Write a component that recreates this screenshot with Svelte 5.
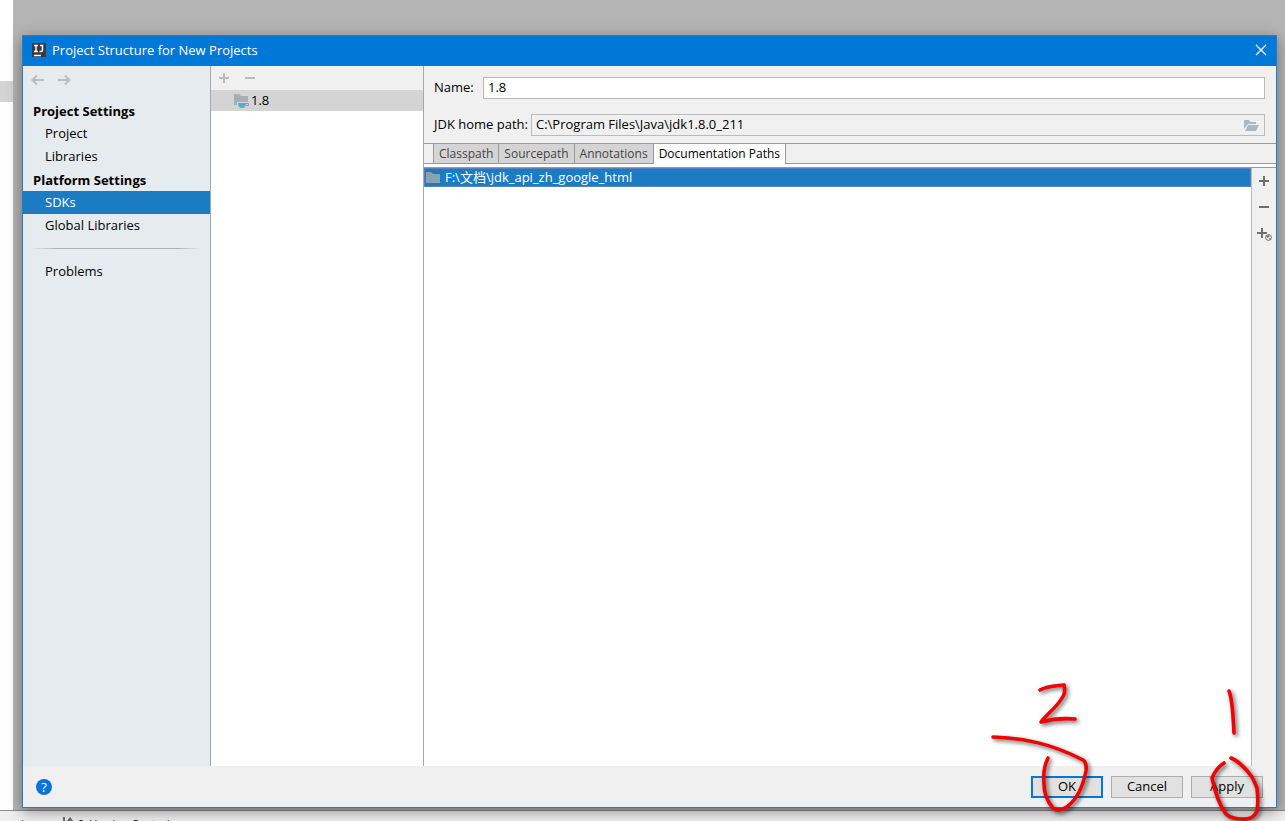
<script>
  const groups = [
    { title: 'Project Settings', items: ['Project', 'Libraries'] },
    { title: 'Platform Settings', items: ['SDKs', 'Global Libraries'] },
  ];
  const tabs = ['Classpath', 'Sourcepath', 'Annotations', 'Documentation Paths'];
  let section = $state('SDKs');
  let tab = $state('Documentation Paths');
  let name = $state('1.8');
  let home = $state('C:\\Program Files\\Java\\jdk1.8.0_211');
</script>

<div class="screen">
  <div class="ide">
    <div class="gutter"><div class="mark"></div></div>
    <div class="canvas"></div>
  </div>
  <div class="status">
    <span>ing</span>
    <svg width="12" height="14" viewBox="0 0 12 14" aria-hidden="true">
      <path d="M2 1v12M8 3v8" stroke="#6e6e6e" stroke-width="2" /><path d="M4 6l4-5 4 5z" fill="#6e6e6e" />
    </svg>
    <span>9: Version Control</span>
  </div>

  <div class="dialog" role="dialog" aria-labelledby="title">
    <header>
      <svg width="14" height="14" viewBox="0 0 14 14" aria-hidden="true">
        <rect width="14" height="14" fill="#3b3b3f" />
        <path d="M2 2.500h4M4 2.500v6M2 8.500h4M8 2.500h2.500v4.500q0 1.500-1.500 1.500h-1.500M2 12.500h7" fill="none" stroke="#fff" stroke-width="1.400" />
      </svg>
      <h1 id="title">Project Structure for New Projects</h1>
      <button class="icon" aria-label="Close">
        <svg width="12" height="12" viewBox="0 0 12 12"><path d="M1 1l10 10M11 1L1 11" stroke="#fff" stroke-width="1.200" /></svg>
      </button>
    </header>

    <div class="body">
      <nav>
        <div class="history">
          <button class="icon" aria-label="Back">
            <svg width="14" height="12" viewBox="0 0 14 12"><path d="M13 6H1.500M6 1.500L1.500 6 6 10.500" /></svg>
          </button>
          <button class="icon" aria-label="Forward">
            <svg width="14" height="12" viewBox="0 0 14 12"><path d="M1 6h11.500M8 1.500L12.500 6 8 10.500" /></svg>
          </button>
        </div>
        {#each groups as g}
          <h2>{g.title}</h2>
          {#each g.items as item}
            <button class="item" class:active={section === item} onclick={() => (section = item)}>{item}</button>
          {/each}
        {/each}
        <div class="divider"></div>
        <button class="item" class:active={section === 'Problems'} onclick={() => (section = 'Problems')}>Problems</button>
      </nav>

      <section class="sdks">
        <div class="tools">
          <button class="icon" aria-label="Add SDK">
            <svg width="10" height="10" viewBox="0 0 10 10"><path d="M5 0v10M0 5h10" /></svg>
          </button>
          <button class="icon" aria-label="Remove SDK">
            <svg width="10" height="10" viewBox="0 0 10 10"><path d="M0 5h10" /></svg>
          </button>
        </div>
        <button class="sdk">
          <svg width="15" height="14" viewBox="0 0 15 14" aria-hidden="true">
            <path d="M0 0h5l2 2h7v9H0z" fill="#a4afb6" />
            <path d="M3 8h12v4h-2l-2 2H5l-2-2z" fill="#d4d4d4" />
            <path d="M4 9h8q0 3-2 5H6q-2-2-2-5z" fill="#40b6e0" />
            <path d="M12 9.500h2.500v2H11.500" fill="none" stroke="#40b6e0" />
          </svg>
          <span>1.8</span>
        </button>
      </section>

      <section class="detail">
        <div class="form">
          <div class="field">
            <label class="short" for="name">Name:</label>
            <div class="box"><input id="name" bind:value={name} /></div>
          </div>
          <div class="field">
            <label for="home">JDK home path:</label>
            <div class="box path">
              <input id="home" bind:value={home} />
              <button class="icon" aria-label="Browse">
                <svg width="15" height="12" viewBox="0 0 15 12">
                  <path d="M0 1h5l1.500 2H12v2H4L0 10z" fill="#aeb7bd" /><path d="M4 6h11l-3 6H1z" fill="#aeb7bd" />
                </svg>
              </button>
            </div>
          </div>
        </div>
        <div class="tabs" role="tablist">
          {#each tabs as t}
            <button role="tab" aria-selected={tab === t} class:on={tab === t} onclick={() => (tab = t)}>{t}</button>
          {/each}
        </div>
        <div class="panel">
          <div class="paths">
            <button class="entry">
              <svg width="14" height="11" viewBox="0 0 14 11" aria-hidden="true"><path d="M0 0h5l2 2h7v9H0z" fill="#86a2b5" /></svg>
              <span>F:\文档\jdk_api_zh_google_html</span>
            </button>
          </div>
          <div class="side">
            <button class="icon" aria-label="Add path">
              <svg width="16" height="16" viewBox="0 0 16 16"><path d="M8 3v10M3 8h10" /></svg>
            </button>
            <button class="icon" aria-label="Remove path">
              <svg width="16" height="16" viewBox="0 0 16 16"><path d="M3 8h10" /></svg>
            </button>
            <button class="icon" aria-label="Specify URL">
              <svg width="16" height="16" viewBox="0 0 16 16">
                <path d="M6 3v10M1 8h10" />
                <circle cx="12.500" cy="12.500" r="4" fill="#f0f0f0" stroke="none" />
                <circle cx="12.500" cy="12.500" r="2.900" fill="#f0f0f0" stroke="#6e6e6e" stroke-width="1" />
                <path d="M10 11l3-1 .5 1.500-2 1.500zM13 13l2 .5-1.500 1.500z" fill="#6e6e6e" stroke="none" />
              </svg>
            </button>
          </div>
        </div>
      </section>
    </div>

    <footer>
      <button class="help" aria-label="Help">?</button>
      <div class="actions">
        <button class="default">OK</button>
        <button>Cancel</button>
        <button>Apply</button>
      </div>
    </footer>
  </div>

  <svg class="ink" width="315" height="151" viewBox="970 670 315 151" aria-hidden="true">
    <path d="M1040 690C1047 686 1056 686 1064 685Q1066 693 1062 698C1057 707 1047 714 1041 722C1052 719 1063 718 1075 719" />
    <path d="M993 737C1025 738 1052 744 1083 760Q1087 763 1086 771C1083 786 1078 798 1068 806Q1058 813 1053 808C1046 800 1044 792 1044 784C1043 774 1044 766 1048 758" />
    <path d="M1229 691C1233 701 1233 718 1234 733" />
    <path d="M1224 763Q1216 768 1212 778C1215 792 1220 806 1226 814Q1231 819 1243 819Q1253 820 1257 811C1258 804 1258 796 1257 788Q1255 783 1252 777Q1241 762 1231 758" />
  </svg>
</div>

<style>
  :global(body) { margin: 0; }
  .screen {
    position: relative;
    display: flex;
    flex-direction: column;
    height: 100vh;
    overflow: hidden;
    font: 13px/16px 'Open Sans', 'Noto Sans CJK SC', sans-serif;
    color: #000;
  }
  button, input { font: inherit; color: inherit; margin: 0; padding: 0; border: 0; background: none; border-radius: 0; }
  h1, h2 { margin: 0; font-size: 13px; line-height: inherit; }
  svg { flex: none; display: block; }
  .icon { display: grid; place-items: center; }
  .icon svg { fill: none; stroke-width: 2; }
  .box .icon svg { stroke: none; }

  .ide { flex: 1; display: flex; min-height: 0; }
  .gutter { width: 13px; background: #fff; padding-top: 81px; box-sizing: border-box; }
  .mark { height: 21px; background: #d4d4d4; }
  .canvas { flex: 1; background: #b4b4b4; }
  .status {
    display: flex;
    gap: 4px;
    height: 11px;
    padding: 5px 0 0 21px;
    box-sizing: border-box;
    overflow: hidden;
    border-top: 1px solid #8c8c8c;
    background: #f0f0f0;
    font-size: 11px;
  }
  .status span:first-child { width: 37px; }

  .dialog {
    position: absolute;
    inset: 35px 8px 13px 22px;
    display: flex;
    flex-direction: column;
    border: 1px solid #1a80d4;
    background: #f0f0f0;
    box-shadow: 0 4px 14px rgba(0, 0, 0, .4);
  }
  header { display: flex; align-items: center; gap: 6px; height: 28px; padding: 0 9px 2px; background: #0078d7; color: #fff; }
  h1 { flex: 1; font-weight: 400; }

  .body { flex: 1; display: flex; min-height: 0; }
  nav { width: 187px; background: #e6ebef; border-right: 1px solid #a9a9a9; line-height: 23px; }
  .history { display: flex; gap: 12px; height: 27px; padding: 0 8px 6px; }
  .history svg { stroke: #bcbcbc; }
  h2 { padding: 2px 0 0 10px; line-height: 21px; font-weight: 700; }
  .item { display: block; width: 100%; padding-left: 22px; text-align: left; }
  .item.active { background: #1b7cc4; color: #fff; }
  .divider { height: 1px; margin: 11px 8px; background: linear-gradient(90deg, transparent, #b0b0b0 15%, #b0b0b0 85%, transparent); }

  .sdks { width: 212px; background: #fff; border-right: 1px solid #a9a9a9; }
  .tools { display: flex; gap: 16px; height: 24px; padding-left: 8px; background: #f0f0f0; }
  .tools svg { stroke: #bcbcbc; }
  .sdk { display: flex; align-items: center; gap: 2px; width: 100%; height: 21px; padding-left: 23px; background: #d4d4d4; }
  .sdk span, .entry span { padding-bottom: 2px; }

  .detail { flex: 1; display: flex; flex-direction: column; min-width: 0; }
  .form { display: flex; flex-direction: column; gap: 15px; padding: 11px 11px 7px 10px; }
  .field { display: flex; align-items: center; }
  label { width: 97px; padding-bottom: 2px; white-space: nowrap; }
  label.short { width: 49px; }
  .box { flex: 1; display: flex; height: 20px; border: 1px solid #bababa; background: #fff; }
  .box.path { background: #f0f0f0; padding-right: 5px; }
  .box input { flex: 1; min-width: 0; padding: 0 4px 2px; outline: 0; }
  .tabs { display: flex; padding-left: 9px; border: solid #999; border-width: 1px 0; }
  .tabs button { height: 19px; padding: 0 5px; border-right: 1px solid #999; background: #d4d4d4; color: #444; font-size: 12px; }
  .tabs button:first-child { border-left: 1px solid #999; }
  .tabs button.on { height: 20px; margin-bottom: -1px; background: #fff; color: #000; }
  .panel { flex: 1; display: flex; border-top: 1px solid #999; margin-top: 3px; box-shadow: 0 -3px #fff; }
  .paths { flex: 1; background: #fff; border-right: 1px solid #bababa; }
  .entry { display: flex; align-items: center; gap: 5px; width: 100%; height: 19px; padding-left: 1px; border: 1px solid #5c7fc0; background: #1b7cc4; color: #fff; }
  .side { display: flex; flex-direction: column; gap: 10px; width: 24px; padding-top: 5px; align-items: center; }
  .side svg { stroke: #6e6e6e; }

  footer { display: flex; align-items: center; justify-content: space-between; height: 41px; padding: 0 13px; }
  .help { width: 16px; height: 16px; border-radius: 50%; background: #0c74d8; color: #fff; }
  .actions { display: flex; gap: 8px; }
  .actions button { width: 72px; height: 22px; padding-bottom: 2px; border: 1px solid #adadad; background: #e1e1e1; }
  .actions .default { border: 2px solid #0078d7; }

  .ink {
    position: absolute;
    right: 0;
    bottom: 0;
    fill: none;
    stroke: #f20000;
    stroke-width: 3.6;
    stroke-linecap: round;
    stroke-linejoin: round;
    pointer-events: none;
    filter: drop-shadow(2px 2px 2px rgba(0, 0, 0, .6));
  }
</style>
